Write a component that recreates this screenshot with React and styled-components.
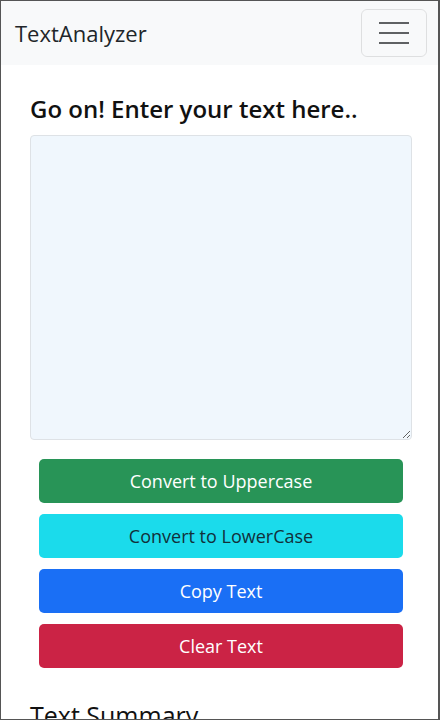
import React from 'react';
import styled, { createGlobalStyle } from 'styled-components';

const Global = createGlobalStyle`
    html, body {
        margin: 0;
        padding: 0;
        background: #fff;
    }
    body {
        font-family: "Open Sans", "Noto Sans", sans-serif;
        color: #212529;
    }
`

const Frame = styled.div`
    box-sizing: border-box;
    width: 440px;
    height: 720px;
    overflow: hidden;
    border: 1px solid #555;
    border-right-width: 2px;
`

const Navbar = styled.nav`
    height: 64px;
    background: #f8f9fa;
    display: flex;
    align-items: center;
    justify-content: space-between;
    padding: 0 11px 0 14px;
`

const Brand = styled.a`
    font-size: 22px;
    color: #212529;
    text-decoration: none;
`

const Toggler = styled.button`
    width: 66px;
    height: 48px;
    border: 1px solid rgba(0, 0, 0, 0.1);
    border-radius: 6px;
    background: transparent;
    display: flex;
    flex-direction: column;
    align-items: center;
    justify-content: center;
    gap: 8px;
    padding: 0;
`

const Bar = styled.span`
    display: block;
    width: 30px;
    height: 2px;
    background: #5f6163;
`

const Main = styled.main`
    padding: 27px 26px 0 29px;
`

const Heading = styled.h1`
    margin: 0 0 10px;
    font-size: 24px;
    font-weight: 600;
    color: #111;
`

const TextArea = styled.textarea`
    display: block;
    box-sizing: border-box;
    width: 100%;
    height: 305px;
    background: #f0f7fd;
    border: 1px solid #dee2e6;
    border-radius: 4px;
    resize: vertical;
    margin: 0;
`

const Buttons = styled.div`
    display: flex;
    flex-direction: column;
    gap: 11px;
    padding: 19px 9px 0 9px;
`

const Button = styled.button`
    height: 44px;
    border: none;
    border-radius: 5px;
    font-family: inherit;
    font-size: 18px;
    background: ${p => p.bg};
    color: ${p => p.fg || '#fff'};
`

const Summary = styled.h2`
    margin: 30px 0 0;
    font-size: 25px;
    font-weight: 500;
    color: #111;
`

const App = () => {
    return (
        <>
            <Global />
            <Frame>
                <Navbar>
                    <Brand href="#">TextAnalyzer</Brand>
                    <Toggler aria-label="menu">
                        <Bar />
                        <Bar />
                        <Bar />
                    </Toggler>
                </Navbar>
                <Main>
                    <Heading>Go on! Enter your text here..</Heading>
                    <TextArea />
                    <Buttons>
                        <Button bg="#289457">Convert to Uppercase</Button>
                        <Button bg="#1bdbeb" fg="#12303a">Convert to LowerCase</Button>
                        <Button bg="#1a6ff5">Copy Text</Button>
                        <Button bg="#cb2345">Clear Text</Button>
                    </Buttons>
                    <Summary>Text Summary</Summary>
                </Main>
            </Frame>
        </>
    )
}

export default App
